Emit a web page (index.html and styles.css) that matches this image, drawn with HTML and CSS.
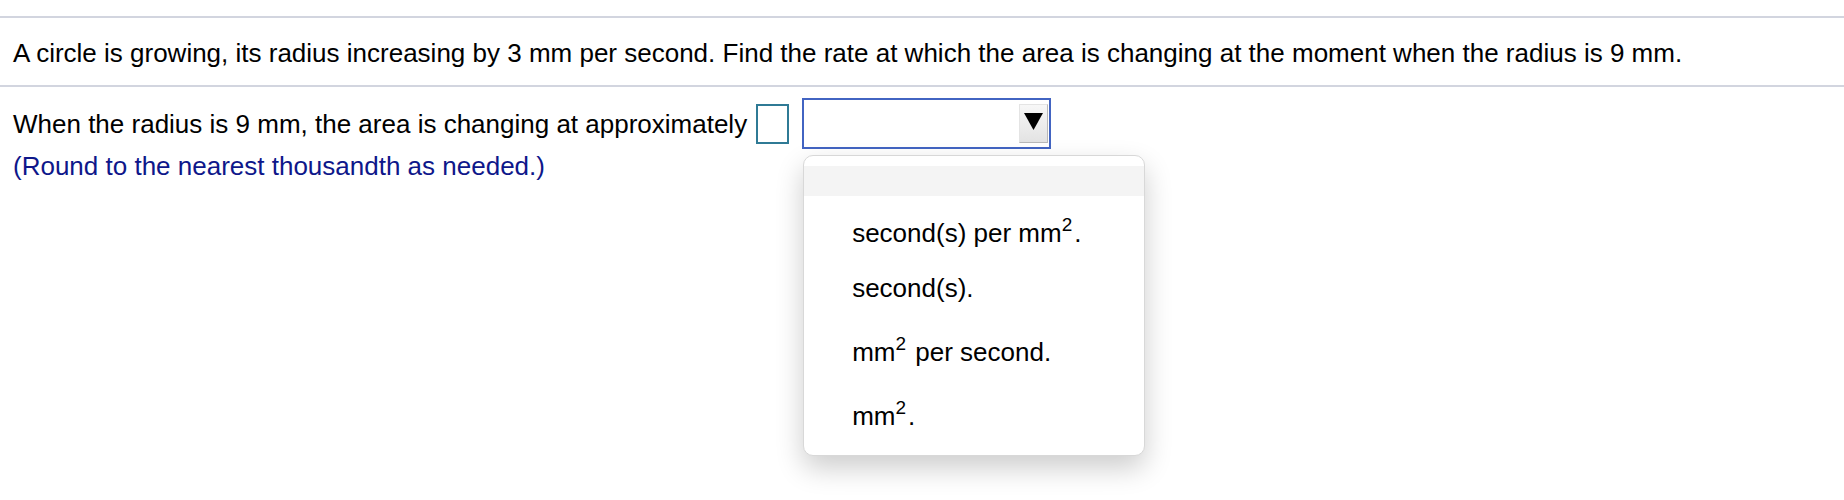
FILE: index.html
```html
<!DOCTYPE html>
<html lang="en">
<head>
    <meta charset="UTF-8">
    <meta name="viewport" content="width=device-width, initial-scale=1.0">
    <title>Related Rates Question</title>
    <link rel="stylesheet" href="styles.css">
</head>
<body>

<div class="question">
    <p class="prompt">A circle is growing, its radius increasing by 3 mm per second. Find the rate at which the area is changing at the moment when the radius is 9 mm.</p>

    <div class="answer">
        <div class="answer-row">
            <span class="answer-text">When the radius is 9 mm, the area is changing at approximately</span>
            <span class="answer-box"></span>
            <div class="unit-select">
                <div class="select-box">
                    <span class="select-arrow">
                        <svg width="19" height="17" viewBox="0 0 19 17"><polygon points="0,0 19,0 9.5,17" fill="#000"/></svg>
                    </span>
                </div>
                <ul class="select-menu">
                    <li class="blank"></li>
                    <li>second(s) per mm<sup>2</sup>.</li>
                    <li>second(s).</li>
                    <li>mm<sup>2</sup> per second.</li>
                    <li>mm<sup>2</sup>.</li>
                </ul>
            </div>
        </div>
        <p class="hint">(Round to the nearest thousandth as needed.)</p>
    </div>
</div>

</body>
</html>
```

FILE: styles.css
```css
html, body {
    height: 100%;
}
body {
    font-family: "Liberation Sans", Arial, sans-serif;
    font-size: 26px;
    color: #000;
    background-color: #fff;
    margin: 0;
    padding: 0;
}
.question {
    padding-top: 16px;
    min-height: 100%;
    box-sizing: border-box;
}
.prompt {
    margin: 0;
    padding: 20px 13px 17px;
    border-top: 2px solid #d2d5df;
    border-bottom: 2px solid #d2d5df;
    line-height: 30px;
}
.answer {
    padding: 11px 13px 0;
}
.answer-row {
    display: flex;
    align-items: center;
}
.answer-text {
    line-height: 30px;
}
.answer-box {
    width: 33px;
    height: 40px;
    box-sizing: border-box;
    border: 2px solid #2f7a95;
    margin-left: 9px;
}
.unit-select {
    position: relative;
    margin-left: 13px;
}
.select-box {
    width: 249px;
    height: 51px;
    box-sizing: border-box;
    border: 2px solid #4264c2;
    background: #fff;
    display: flex;
    justify-content: flex-end;
    align-items: center;
    padding-right: 1px;
}
.select-arrow {
    width: 29px;
    height: 39px;
    box-sizing: border-box;
    border: 1px solid;
    border-color: #e4e4e4 #b8b8b8 #b8b8b8 #e4e4e4;
    background: linear-gradient(#f7f7f7, #e3e3e3);
    display: flex;
    justify-content: center;
    align-items: center;
}
.select-arrow svg {
    display: block;
    margin-top: -4px;
}
.select-menu {
    position: absolute;
    top: 57px;
    left: 1px;
    width: 342px;
    box-sizing: border-box;
    margin: 0;
    padding: 10px 0 12px;
    list-style: none;
    background: #fff;
    border: 1px solid #d8d8d8;
    border-radius: 10px;
    box-shadow: 0 12px 28px rgba(0, 0, 0, 0.2);
    z-index: 2;
}
.select-menu li {
    padding: 12.5px 0 12.5px 48px;
    line-height: 30px;
}
.select-menu li.blank {
    height: 30px;
    padding: 0;
    background-color: #f4f4f4;
}
.select-menu sup {
    font-size: 19px;
    line-height: 32px;
    vertical-align: 11px;
    margin-right: 2px;
}
.hint {
    margin: 0;
    padding-top: 2px;
    line-height: 30px;
    color: #0e178a;
}
```
